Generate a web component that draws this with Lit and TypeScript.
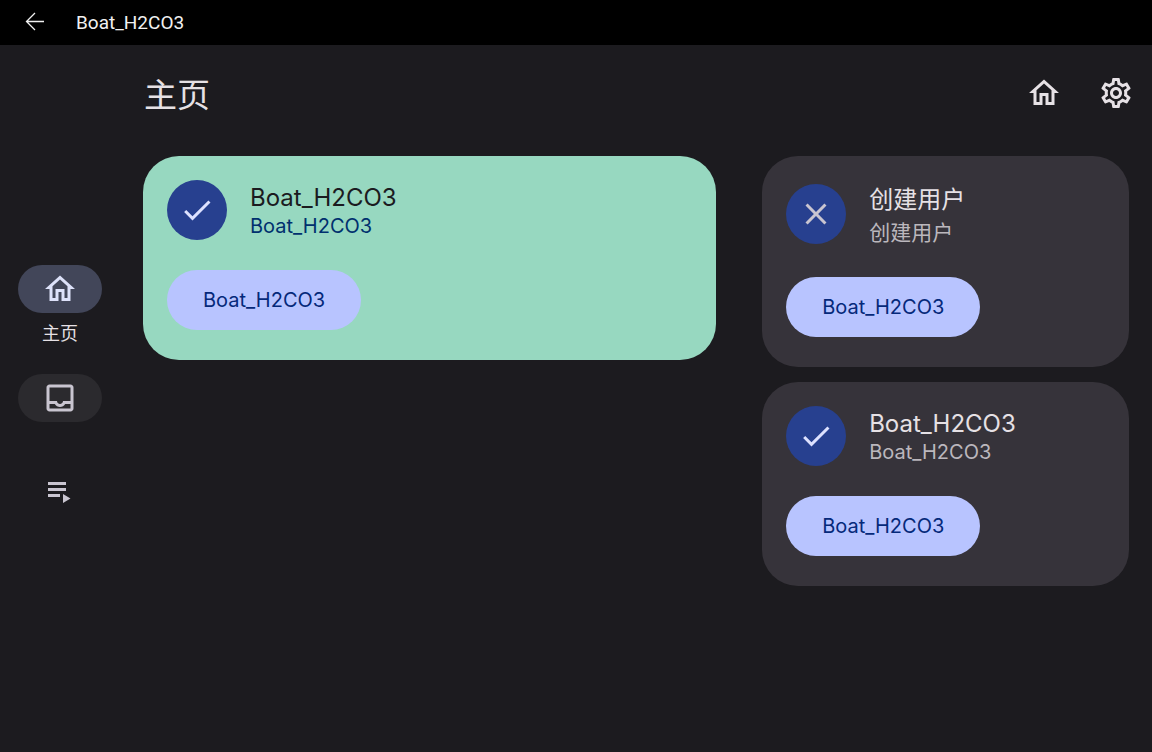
import { LitElement, html, css, svg } from "lit";
import { customElement, property } from "lit/decorators.js";

const ICONS = {
  home: "M12 5.69l5 4.5V18h-2v-6H9v6H7v-7.81l5-4.5M12 3L2 12h3v8h6v-6h2v6h6v-8h3L12 3z",
  settings:
    "M19.43 12.98c.04-.32.07-.64.07-.98 0-.34-.03-.66-.07-.98l2.11-1.65c.19-.15.24-.42.12-.64l-2-3.46c-.09-.16-.26-.25-.44-.25-.06 0-.12.01-.17.03l-2.49 1c-.52-.4-1.08-.73-1.69-.98l-.38-2.65C14.46 2.18 14.25 2 14 2h-4c-.25 0-.46.18-.49.42l-.38 2.65c-.61.25-1.17.59-1.69.98l-2.49-1c-.06-.02-.12-.03-.18-.03-.17 0-.34.09-.43.25l-2 3.46c-.13.22-.07.49.12.64l2.11 1.65c-.04.32-.07.65-.07.98 0 .33.03.66.07.98l-2.11 1.65c-.19.15-.24.42-.12.64l2 3.46c.09.16.26.25.44.25.06 0 .12-.01.17-.03l2.49-1c.52.4 1.08.73 1.69.98l.38 2.65c.03.24.24.42.49.42h4c.25 0 .46-.18.49-.42l.38-2.65c.61-.25 1.17-.59 1.69-.98l2.49 1c.06.02.12.03.18.03.17 0 .34-.09.43-.25l2-3.46c.12-.22.07-.49-.12-.64l-2.11-1.65zm-1.98-1.71c.04.31.05.52.05.73 0 .21-.02.43-.05.73l-.14 1.13.89.7 1.08.84-.7 1.21-1.27-.51-1.04-.42-.9.68c-.43.32-.84.56-1.25.73l-1.06.43-.16 1.13-.2 1.35h-1.4l-.19-1.35-.16-1.13-1.06-.43c-.43-.18-.83-.41-1.23-.71l-.91-.7-1.06.43-1.27.51-.7-1.21 1.08-.84.89-.7-.14-1.13c-.03-.31-.05-.54-.05-.74s.02-.43.05-.73l.14-1.13-.89-.7-1.08-.84.7-1.21 1.27.51 1.04.42.9-.68c.43-.32.84-.56 1.25-.73l1.06-.43.16-1.13.2-1.35h1.39l.19 1.35.16 1.13 1.06.43c.43.18.83.41 1.23.71l.91.7 1.06-.43 1.27-.51.7 1.21-1.07.85-.89.7.14 1.13zM12 8c-2.21 0-4 1.79-4 4s1.79 4 4 4 4-1.79 4-4-1.79-4-4-4zm0 6c-1.1 0-2-.9-2-2s.9-2 2-2 2 .9 2 2-.9 2-2 2z",
  inbox:
    "M19 3H5c-1.1 0-2 .9-2 2v14c0 1.1.9 2 2 2h14c1.1 0 2-.9 2-2V5c0-1.1-.9-2-2-2zM5 19v-3h3.56c.69 1.19 1.97 2 3.44 2s2.75-.81 3.44-2H19v3H5zm14-5h-5c0 1.1-.9 2-2 2s-2-.9-2-2H5V5h14v9z",
  playlist: "M4 6h12v2H4zM4 10h12v2H4zM4 14h8v2H4zM14 14v6l5-3z",
  check: "M9 16.17L4.83 12l-1.42 1.41L9 19 21 7l-1.41-1.41z",
  close: "M19 6.41L17.59 5 12 10.59 6.41 5 5 6.41 10.59 12 5 17.59 6.41 19 12 13.41 17.59 19 19 17.59 13.41 12z",
};

type IconName = keyof typeof ICONS;

@customElement("md-icon")
class MdIcon extends LitElement {
  @property() name: IconName = "home";

  static styles = css`
    :host {
      display: block;
      width: 36px;
      height: 36px;
    }
    .glyph {
      display: block;
      width: 100%;
      height: 100%;
      fill: currentColor;
    }
  `;

  render() {
    return html`<svg class="glyph" viewBox="0 0 24 24" aria-hidden="true">
      ${svg`<path d=${ICONS[this.name]}></path>`}
    </svg>`;
  }
}

@customElement("status-card")
class StatusCard extends LitElement {
  @property() icon: IconName = "check";
  @property() heading = "";
  @property() detail = "";
  @property() action = "";
  @property({ reflect: true }) tone = "neutral";

  static styles = css`
    :host {
      display: block;
      --card: #36333a;
      --heading: #e6e1e5;
      --detail: #bbb7bd;
    }
    :host([tone="success"]) {
      --card: #97d8c0;
      --heading: #1b1b1f;
      --detail: #00306e;
    }
    .card {
      padding: 24px 24px 30px;
      border-radius: 36px;
      background: var(--card);
    }
    .head {
      display: flex;
      align-items: center;
      gap: 23px;
      min-height: 60px;
      margin-bottom: 30px;
    }
    .badge {
      display: grid;
      place-items: center;
      flex: none;
      width: 60px;
      height: 60px;
      border-radius: 50%;
      background: #27408f;
      color: #dde1ff;
    }
    .badge.close {
      color: #c9c5d0;
    }
    .text {
      padding-top: 3px;
    }
    .heading,
    .detail {
      margin: 0;
      font-weight: 400;
    }
    .heading {
      font-size: 24px;
      line-height: 30px;
      color: var(--heading);
    }
    .detail {
      font-size: 20px;
      line-height: 27px;
      color: var(--detail);
    }
    .heading:lang(zh) {
      margin-bottom: 2px;
      line-height: 33px;
    }
    .detail:lang(zh) {
      font-size: 21px;
      line-height: 29px;
    }
    .action {
      display: block;
      height: 60px;
      padding: 0 36px;
      border: 0;
      border-radius: 30px;
      background: #b8c4ff;
      color: #05297a;
      font: inherit;
      font-size: 20px;
      cursor: pointer;
    }
  `;

  render() {
    const lang = /[\u4e00-\u9fff]/.test(this.heading) ? "zh" : "en";
    return html`<article class="card">
      <div class="head">
        <div class="badge ${this.icon}"><md-icon name=${this.icon}></md-icon></div>
        <div class="text">
          <h2 class="heading" lang=${lang}>${this.heading}</h2>
          <p class="detail" lang=${lang}>${this.detail}</p>
        </div>
      </div>
      <button class="action" type="button">${this.action}</button>
    </article>`;
  }
}

@customElement("app-root")
class AppRoot extends LitElement {
  static styles = css`
    :host {
      display: flex;
      flex-direction: column;
      min-height: 100vh;
      background: #1c1b1f;
      color: #e6e1e5;
      font-family: Inter, "Noto Sans CJK SC", sans-serif;
    }
    .titlebar {
      display: flex;
      align-items: center;
      gap: 30px;
      height: 45px;
      padding: 0 24px;
      background: #000;
      color: #f1f1f1;
      font-family: Roboto, sans-serif;
      font-size: 19px;
    }
    .back {
      display: block;
      padding: 0 0 2px;
      border: 0;
      background: none;
      color: inherit;
      cursor: pointer;
    }
    .arrow {
      display: block;
      width: 22px;
      height: 22px;
      fill: none;
      stroke: currentColor;
      stroke-width: 1.3;
    }
    .body {
      display: flex;
      flex: 1;
    }
    .rail {
      display: flex;
      flex-direction: column;
      align-items: center;
      flex: none;
      width: 120px;
      padding-top: 220px;
    }
    .item {
      display: flex;
      flex-direction: column;
      align-items: center;
      gap: 7px;
      color: #c9c5d0;
      font-size: 18px;
      line-height: 27px;
      text-decoration: none;
    }
    .item.active {
      margin-bottom: 27px;
      color: #e6e1e5;
    }
    .pill {
      display: grid;
      place-items: center;
      width: 84px;
      height: 48px;
      border-radius: 24px;
    }
    .active .pill {
      background: #424659;
      color: #dde1f9;
    }
    .hover .pill {
      background: #2b2a2e;
    }
    .item.hover {
      margin-bottom: 45px;
    }
    .main {
      flex: 1;
      min-width: 0;
      padding: 0 23px;
    }
    .header {
      display: flex;
      align-items: center;
      justify-content: space-between;
      height: 96px;
      margin-bottom: 15px;
    }
    .title {
      margin: 0;
      padding: 4px 0 0 1px;
      font-size: 33px;
      font-weight: 400;
      line-height: 48px;
    }
    .tools {
      display: flex;
      gap: 36px;
      margin-right: -5px;
    }
    .tool {
      padding: 0;
      border: 0;
      background: none;
      color: inherit;
      cursor: pointer;
    }
    .cards {
      display: grid;
      grid-template-columns: 25fr 16fr;
      align-items: start;
      gap: 46px;
    }
    .stack {
      display: grid;
      gap: 15px;
    }
  `;

  render() {
    return html`
      <header class="titlebar">
        <button class="back" type="button" aria-label="返回">
          <svg class="arrow" viewBox="0 0 22 22" aria-hidden="true">
            <path d="M20 10.5H2.5M11 2L2.5 10.5L11 19"></path>
          </svg>
        </button>
        <span>Boat_H2CO3</span>
      </header>
      <div class="body">
        <nav class="rail">
          <a class="item active" href="#home" aria-current="page">
            <span class="pill"><md-icon name="home"></md-icon></span>
            <span>主页</span>
          </a>
          <a class="item hover" href="#inbox" aria-label="收件箱">
            <span class="pill"><md-icon name="inbox"></md-icon></span>
          </a>
          <a class="item" href="#tasks" aria-label="任务">
            <span class="pill"><md-icon name="playlist"></md-icon></span>
          </a>
        </nav>
        <main class="main">
          <div class="header">
            <h1 class="title">主页</h1>
            <div class="tools">
              <button class="tool" type="button" aria-label="主页"><md-icon name="home"></md-icon></button>
              <button class="tool" type="button" aria-label="设置"><md-icon name="settings"></md-icon></button>
            </div>
          </div>
          <div class="cards">
            <status-card tone="success" heading="Boat_H2CO3" detail="Boat_H2CO3" action="Boat_H2CO3"></status-card>
            <div class="stack">
              <status-card icon="close" heading="创建用户" detail="创建用户" action="Boat_H2CO3"></status-card>
              <status-card heading="Boat_H2CO3" detail="Boat_H2CO3" action="Boat_H2CO3"></status-card>
            </div>
          </div>
        </main>
      </div>
    `;
  }
}
